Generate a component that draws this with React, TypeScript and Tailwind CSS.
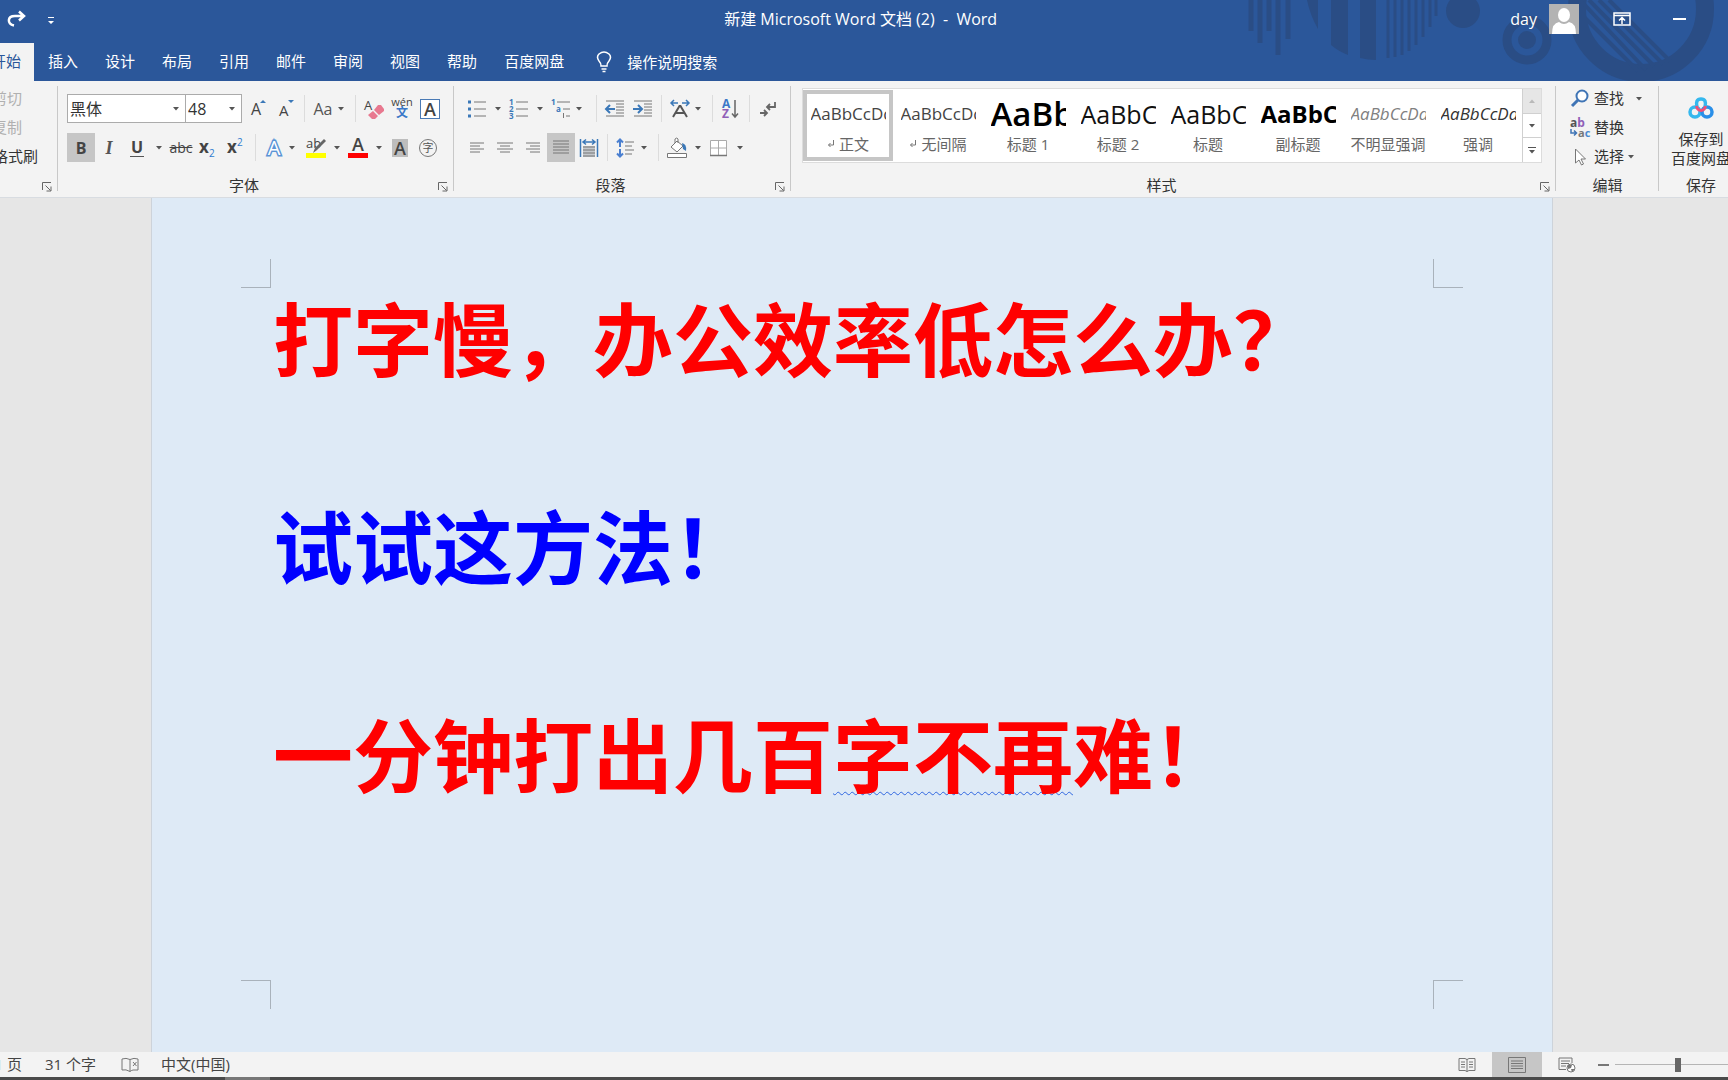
import React from "react";
import clsx from "clsx";

const tabs = ["插入", "设计", "布局", "引用", "邮件", "审阅", "视图", "帮助", "百度网盘"];

const styles = [
  { name: "正文", mark: true, sample: "AaBbCcDd", look: "text-[17px] text-[#444]" },
  { name: "无间隔", mark: true, sample: "AaBbCcDd", look: "text-[17px] text-[#444]" },
  { name: "标题 1", sample: "AaBbCc", look: "text-[33px] font-semibold text-black" },
  { name: "标题 2", sample: "AaBbCc", look: "text-[25px] text-[#111]" },
  { name: "标题", sample: "AaBbCc", look: "text-[25px] text-[#111]" },
  { name: "副标题", sample: "AaBbCc", look: "text-[24px] font-bold text-black" },
  { name: "不明显强调", sample: "AaBbCcDd", look: "text-[17px] italic text-[#808080]" },
  { name: "强调", sample: "AaBbCcDd", look: "text-[17px] italic text-[#333]" },
];

const Triangle = ({ className }: { className?: string }) => (
  <svg viewBox="0 0 6 4" className={clsx("h-1 w-1.5 shrink-0", className)} fill="#555">
    <path d="M0 0h6L3 3.6z" />
  </svg>
);

const Caret = ({ label, className = "w-3.5" }: { label: string; className?: string }) => (
  <button
    aria-label={label}
    className={clsx("flex h-full shrink-0 items-center justify-center", className)}
  >
    <Triangle />
  </button>
);

const Sep = () => <span className="mx-1 h-[27px] w-px shrink-0 bg-[#dcdcdc]" />;

type ToolProps = {
  label: string;
  active?: boolean;
  children: React.ReactNode;
};

const Tool = ({ label, active, children }: ToolProps) => (
  <button
    aria-label={label}
    title={label}
    className={clsx(
      "flex h-full w-7 shrink-0 items-center justify-center",
      active && "bg-[#c6c6c6]",
    )}
  >
    {children}
  </button>
);

const Icon = ({ children }: { children: React.ReactNode }) => (
  <svg
    viewBox="0 0 20 20"
    className="h-5 w-5 shrink-0 overflow-visible font-['Open_Sans',sans-serif]"
    fill="none"
    stroke="#777"
  >
    {children}
  </svg>
);

const Launcher = ({ label }: { label: string }) => (
  <button aria-label={label} className="absolute right-[6px] bottom-[5px]">
    <svg viewBox="0 0 10 10" className="h-[10px] w-[10px]" fill="none" stroke="#666">
      <path d="M.5 8V.5H9M3.500 3.500l5 5M9 4.500V9H4.500" />
    </svg>
  </button>
);

type GroupProps = {
  title?: string;
  launcher?: boolean;
  className?: string;
  children: React.ReactNode;
};

const Group = ({ title, launcher, className, children }: GroupProps) => (
  <section className={clsx("relative flex flex-col", className)}>
    {children}
    {title && (
      <h2
        className={clsx(
          "absolute inset-x-0 bottom-[2px] text-center leading-5",
          launcher && "pr-6",
        )}
      >
        {title}
      </h2>
    )}
    {launcher && <Launcher label={`${title ?? "剪贴板"}设置`} />}
    <span className="absolute top-[5px] right-0 bottom-[6px] w-px bg-[#c8c8c8]" />
  </section>
);

const Row = ({ children }: { children: React.ReactNode }) => (
  <div className="flex h-[29px] items-center">{children}</div>
);

const lines = (rows: [number, number, number][]) =>
  rows.map(([y, from, to]) => <path key={y} d={`M${from} ${y}H${to}`} />);

const TitleArt = () => (
  <svg
    viewBox="0 0 528 81"
    className="pointer-events-none absolute top-0 right-0 h-[81px] w-[528px]"
    fill="#2a4d85"
    stroke="#2a4d85"
  >
    <g strokeWidth="5" fill="none">
      <path d="M51 0V31M60 0V43M69 0V31M78 0V55M88 0V39" />
      <path strokeWidth="3" d="M188 0V58M195 0V57M202 0V55M209 0V51M216 0V45M223 0V37M230 0V27M236 0V16" />
    </g>
    <g stroke="none">
      <path d="M107 0h11v29Q110 15 107 0zM131 0h17v55q-10-4-17-10zM160 0h16v60q-8 0-16-2z" />
      <circle cx="263" cy="11" r="17" />
      <circle cx="327" cy="40" r="9" />
    </g>
    <g fill="none">
      <circle cx="327" cy="40" r="20" strokeWidth="9" />
      <circle cx="441" cy="9" r="64" strokeWidth="18" />
      <path
        strokeWidth="4"
        d="M372 5l66 66M380 0l66 70M389 0l65 66M399 0l64 64M409 0l61 61"
      />
    </g>
  </svg>
);

const TitleBar = () => (
  <div className="relative flex h-[43px] items-center pb-[5px] text-base">
    <button aria-label="重做" className="ml-[7px]">
      <svg viewBox="0 0 20 18" className="h-[18px] w-5" fill="none" stroke="#fff" strokeWidth="2.500">
        <path d="M7 15.500C0 14 0 6 8 6h8M12 1.500l5 4.500-5 4.500" />
      </svg>
    </button>
    <button aria-label="自定义快速访问工具栏" className="ml-5 pt-1">
      <svg viewBox="0 0 8 8" className="h-2 w-2" fill="#fff">
        <path d="M1 0h6v1H1zM1 4h6L4 7z" />
      </svg>
    </button>
    <h1 className="flex-1 pl-[156px] text-center whitespace-pre">
      {"新建 Microsoft Word 文档 (2)  -  Word"}
    </h1>
    <div className="mr-[42px] flex items-center">
      <span>day</span>
      <button aria-label="帐户" className="ml-3">
        <svg viewBox="0 0 30 30" className="h-[30px] w-[30px]">
          <path fill="#b3b3b3" d="M0 0h30v30H0z" />
          <ellipse cx="15" cy="11" rx="6" ry="7" fill="#fff" />
          <path fill="#fff" d="M3 30q0-11 7-12 5 4 10 0 7 1 7 12z" />
        </svg>
      </button>
      <button aria-label="功能区显示选项" className="ml-[34px]">
        <svg viewBox="0 0 18 14" className="h-[14px] w-[18px]" fill="none" stroke="#fff" strokeWidth="1.500">
          <path d="M1 1h16v12H1zM1 3.500h16M9 12V6M6 8.500L9 5.500l3 3" />
        </svg>
      </button>
      <button aria-label="最小化" className="ml-[42px] flex h-4 w-[13px] items-center">
        <span className="h-[2px] w-full bg-white" />
      </button>
    </div>
  </div>
);

const TabBar = () => (
  <nav className="relative flex h-[38px] items-stretch">
    <div className="flex w-[34px] justify-end overflow-hidden bg-[#f3f3f3] pr-[13px]">
      <button className="shrink-0 pb-[2px] text-[#2b579a]">开始</button>
    </div>
    <div className="ml-[14px] flex gap-[27px] pb-[2px]">
      {tabs.map((tab) => (
        <button key={tab}>{tab}</button>
      ))}
    </div>
    <label className="ml-8 flex items-center gap-[15px]">
      <svg viewBox="0 0 16 22" className="h-[22px] w-4" fill="none" stroke="#fff" strokeWidth="1.500">
        <path d="M5 15q0-3-2-5Q0 6 3 3q5-4 10 0 3 3 0 7-2 2-2 5zM5.500 18h5M6.500 20.500h3" />
      </svg>
      <input
        type="text"
        placeholder="操作说明搜索"
        className="w-40 bg-transparent outline-none placeholder:text-white"
      />
    </label>
  </nav>
);

const ClipboardGroup = () => (
  <Group launcher className="w-[58px] shrink-0 items-end overflow-hidden pt-[3px] pr-5">
    <button className="mr-4 h-[29px] shrink-0 whitespace-nowrap text-[#b0b0b0]">剪切</button>
    <button className="mr-4 h-[29px] shrink-0 whitespace-nowrap text-[#b0b0b0]">复制</button>
    <button className="h-[29px] shrink-0 whitespace-nowrap">格式刷</button>
  </Group>
);

type ComboProps = { label: string; value: string; className: string };

const Combo = ({ label, value, className }: ComboProps) => (
  <div className={clsx("relative h-[29px] border border-[#ababab] bg-white", className)}>
    <select
      aria-label={label}
      className="h-full w-full appearance-none bg-transparent pl-[2px] text-base outline-none"
    >
      <option>{value}</option>
    </select>
    <Triangle className="pointer-events-none absolute top-3 right-[6px]" />
  </div>
);

const FontGroup = () => (
  <Group title="字体" launcher className="w-[396px] shrink-0 gap-[10px] pt-[13px] pl-[9px]">
    <Row>
      <Combo label="字体" value="黑体" className="w-[119px]" />
      <Combo label="字号" value="48" className="-ml-px mr-[2px] w-[57px]" />
      <Tool label="增大字号">
        <Icon>
          <text x="3" y="16" fontSize="16" fill="#444" stroke="none">A</text>
          <path fill="#3b78b8" stroke="none" d="M12 4l3-3 3 3z" />
        </Icon>
      </Tool>
      <Tool label="减小字号">
        <Icon>
          <text x="3" y="17" fontSize="15" fill="#444" stroke="none">A</text>
          <path fill="#3b78b8" stroke="none" d="M12 1l3 3 3-3z" />
        </Icon>
      </Tool>
      <Sep />
      <Tool label="更改大小写">
        <span className="text-base text-[#555]">Aa</span>
      </Tool>
      <Caret label="大小写选项" className="mr-1.5 w-2" />
      <Sep />
      <Tool label="清除所有格式">
        <Icon>
          <text x="0" y="11" fontSize="13" fill="#444" stroke="none">A</text>
          <path fill="#e8788f" stroke="none" d="M14 6h3l3 4v2l-5 4-5-5zM9 12l5 5-3 3H8l-4-4z" />
        </Icon>
      </Tool>
      <Tool label="拼音指南">
        <Icon>
          <text x="10" y="7" fontSize="11" textAnchor="middle" fill="#444" stroke="none">wén</text>
          <text x="10" y="18" fontSize="12" fontWeight="bold" textAnchor="middle" fill="#3b78c8" stroke="none" className="font-['Noto_Sans_CJK_SC',sans-serif]">文</text>
        </Icon>
      </Tool>
      <Tool label="字符边框">
        <span className="flex h-5 w-5 items-center justify-center border border-[#4a7ab5] bg-white text-lg leading-none font-semibold text-[#444]">
          A
        </span>
      </Tool>
    </Row>
    <Row>
      <Tool label="加粗" active>
        <b className="text-base text-[#444]">B</b>
      </Tool>
      <Tool label="倾斜">
        <i className="font-['Liberation_Serif',serif] text-lg font-bold text-[#555]">I</i>
      </Tool>
      <Tool label="下划线">
        <b className="border-b border-[#555] px-px text-base leading-[17px] text-[#444]">U</b>
      </Tool>
      <Caret label="下划线样式" className="w-4" />
      <Tool label="删除线">
        <span className="text-sm text-[#444] line-through">abc</span>
      </Tool>
      <Tool label="下标">
        <Icon>
          <text x="0" y="15" fontSize="17" fontWeight="bold" fill="#444" stroke="none">x</text>
          <text x="10" y="19" fontSize="10" fill="#2f7bd0" stroke="none">2</text>
        </Icon>
      </Tool>
      <Tool label="上标">
        <Icon>
          <text x="0" y="15" fontSize="17" fontWeight="bold" fill="#444" stroke="none">x</text>
          <text x="10" y="8" fontSize="10" fill="#2f7bd0" stroke="none">2</text>
        </Icon>
      </Tool>
      <Sep />
      <Tool label="文本效果">
        <Icon>
          <text
            x="10"
            y="17"
            fontSize="20"
            textAnchor="middle"
            fill="#fff"
            stroke="#5b94d6"
            strokeWidth="3"
            paintOrder="stroke"
          >
            A
          </text>
        </Icon>
      </Tool>
      <Caret label="文本效果选项" className="mr-1.5 w-2" />
      <Tool label="突出显示">
        <Icon>
          <text x="0" y="10" fontSize="13" fill="#444" stroke="none">ab</text>
          <path fill="#666" stroke="none" d="M18 1l2 2-9 9-4 3 2-5z" />
          <path fill="#ff0" stroke="none" d="M0 15h20v5H0z" />
        </Icon>
      </Tool>
      <Caret label="突出显示颜色" />
      <Tool label="字体颜色">
        <Icon>
          <text x="10" y="13" fontSize="18" fontWeight="600" textAnchor="middle" fill="#444" stroke="none">A</text>
          <path fill="#f00" stroke="none" d="M0 15h20v5H0z" />
        </Icon>
      </Tool>
      <Caret label="字体颜色选项" />
      <Tool label="字符底纹">
        <span className="flex h-[18px] w-4 items-center justify-center bg-[#bdbdbd] text-lg leading-none font-semibold text-[#444]">
          A
        </span>
      </Tool>
      <Tool label="带圈字符">
        <span className="flex h-[18px] w-[18px] items-center justify-center rounded-full border border-[#777] text-[11px] leading-none text-[#555]">
          字
        </span>
      </Tool>
    </Row>
  </Group>
);

const ParagraphGroup = () => (
  <Group title="段落" launcher className="w-[337px] shrink-0 gap-[10px] pt-[13px] pl-[9px]">
    <Row>
      <Tool label="项目符号">
        <Icon>
          {lines([[3, 7, 19], [10, 7, 19], [17, 7, 19]])}
          <path stroke="#3b78b8" strokeWidth="3" d="M1 3h3M1 10h3M1 17h3" />
        </Icon>
      </Tool>
      <Caret label="项目符号库" />
      <Tool label="编号">
        <Icon>
          {lines([[3, 7, 19], [10, 7, 19], [17, 7, 19]])}
          <g fontSize="8" fontWeight="bold" fill="#3b78b8" stroke="none">
            <text x="0" y="6">1</text>
            <text x="0" y="13">2</text>
            <text x="0" y="20">3</text>
          </g>
        </Icon>
      </Tool>
      <Caret label="编号库" />
      <Tool label="多级列表">
        <Icon>
          {lines([[3, 6, 19], [10, 12, 19], [17, 15, 19]])}
          <path d="M12.500 14v5" />
          <g fontSize="8" fontWeight="bold" fill="#3b78b8" stroke="none">
            <text x="0" y="6">1</text>
            <text x="5" y="13">a</text>
          </g>
        </Icon>
      </Tool>
      <Caret label="多级列表库" className="mr-[9px] w-2" />
      <Sep />
      <Tool label="减少缩进量">
        <Icon>
          {lines([[2, 1, 19], [5, 11, 19], [8, 11, 19], [11, 11, 19], [14, 11, 19], [17, 1, 19]])}
          <path stroke="#3b78b8" strokeWidth="2" d="M10 10H2M5 6l-4 4 4 4" />
        </Icon>
      </Tool>
      <Tool label="增加缩进量">
        <Icon>
          {lines([[2, 1, 19], [5, 11, 19], [8, 11, 19], [11, 11, 19], [14, 11, 19], [17, 1, 19]])}
          <path stroke="#3b78b8" strokeWidth="2" d="M0 10h8M5 6l4 4-4 4" />
        </Icon>
      </Tool>
      <Sep />
      <Tool label="中文版式">
        <Icon>
          <path strokeWidth="2" stroke="#555" d="M3 18L9.500 7h1L17 18M6 14h8" />
          <path stroke="#3b78b8" strokeWidth="1.500" d="M8 4H1M4 1L1 4l3 3M12 4h7M16 1l3 3-3 3" />
        </Icon>
      </Tool>
      <Caret label="中文版式选项" className="mr-1.5 w-2" />
      <Sep />
      <Tool label="排序">
        <Icon>
          <text x="1" y="9" fontSize="12" fontWeight="bold" fill="#3b78c8" stroke="none">A</text>
          <text x="1" y="19" fontSize="12" fontWeight="bold" fill="#9060b8" stroke="none">Z</text>
          <path strokeWidth="1.500" stroke="#666" d="M14 1v17M11 14.500l3 3.500 3-3.500" />
        </Icon>
      </Tool>
      <Sep />
      <Tool label="显示编辑标记">
        <Icon>
          <path stroke="#666" strokeWidth="1.800" d="M17 3v5H9M12 5L9 8l3 3M2 14h7M6 11l3 3-3 3" />
        </Icon>
      </Tool>
    </Row>
    <Row>
      <Tool label="左对齐">
        <Icon>{lines([[5, 3, 17], [8, 3, 13], [11, 3, 17], [14, 3, 13]])}</Icon>
      </Tool>
      <Tool label="居中">
        <Icon>{lines([[5, 2, 18], [8, 5, 15], [11, 2, 18], [14, 5, 15]])}</Icon>
      </Tool>
      <Tool label="右对齐">
        <Icon>{lines([[5, 3, 17], [8, 7, 17], [11, 3, 17], [14, 7, 17]])}</Icon>
      </Tool>
      <Tool label="两端对齐" active>
        <Icon>{lines([[3, 2, 18], [6, 2, 18], [9, 2, 18], [12, 2, 18], [15, 2, 18]])}</Icon>
      </Tool>
      <Tool label="分散对齐">
        <Icon>
          <path fill="#c4c8cc" stroke="none" d="M4 8h12v11H4z" />
          {lines([[9, 4, 16], [12, 4, 16], [15, 4, 16], [18, 4, 16]])}
          <path stroke="#3b78b8" strokeWidth="1.500" d="M1.500 1v18M18.500 1v18M4 4h12M7 1.500L4 4l3 2.500M13 1.500L16 4l-3 2.500" />
        </Icon>
      </Tool>
      <Sep />
      <Tool label="行距">
        <Icon>
          {lines([[4, 9, 18], [8, 9, 16], [12, 9, 18], [16, 9, 16]])}
          <path stroke="#4a7fd0" strokeWidth="2" d="M4 2v7M1 4.500l3-3 3 3M4 11v7M1 15.500l3 3 3-3" />
        </Icon>
      </Tool>
      <Caret label="行距选项" className="mr-1.5 w-2" />
      <Sep />
      <Tool label="底纹">
        <Icon>
          <path fill="#fff" d="M4 9l6-6 6 5-6 6zM8 5V1q2-2 3 0v4" />
          <path fill="#3b78b8" stroke="none" d="M15 5q5 1 4 8l-3-2z" />
          <path fill="#fff" d="M.5 15.500h19v4H.5z" />
        </Icon>
      </Tool>
      <Caret label="底纹颜色" />
      <Tool label="边框">
        <Icon>
          <path fill="#fff" stroke="#aaa" d="M1.500 2.500h16v15h-16zM9.500 2.500v15M1.500 10h16" />
          <path strokeWidth="1.500" d="M1 17.500h17" />
        </Icon>
      </Tool>
      <Caret label="边框选项" />
    </Row>
  </Group>
);

const StylesGroup = () => (
  <Group title="样式" launcher className="min-w-0 flex-1 pt-[7px] pr-[14px] pl-[11px]">
    <div className="flex h-[75px] border border-[#dcdcdc] bg-white">
      <div className="flex min-w-0 flex-1 overflow-hidden py-px">
        {styles.map((s, i) => (
          <button
            key={s.name}
            className={clsx(
              "flex w-[90px] shrink-0 flex-col items-center border-4",
              i === 0 ? "border-[#c6c6c6]" : "border-transparent",
            )}
          >
            <span className="flex h-10 w-[75px] items-center overflow-hidden">
              <span className={clsx("leading-10", s.look)}>{s.sample}</span>
            </span>
            <span className="flex items-center gap-1 leading-5 whitespace-nowrap text-[#666]">
              {s.mark && (
                <svg viewBox="0 0 8 8" className="h-2 w-2" fill="none" stroke="#777">
                  <path d="M6.500 0v5H1.500M3.500 3l-2 2 2 2" />
                </svg>
              )}
              {s.name}
            </span>
          </button>
        ))}
      </div>
      <div className="flex w-[19px] flex-col divide-y divide-[#d0d0d0] border-l border-[#d0d0d0]">
        <button aria-label="上一行" className="flex flex-1 items-center justify-center bg-[#e6e6e6]">
          <Triangle className="rotate-180 opacity-30" />
        </button>
        <button aria-label="下一行" className="flex flex-1 items-center justify-center">
          <Triangle />
        </button>
        <button aria-label="其他样式" className="flex flex-1 flex-col items-center justify-center gap-[2px]">
          <span className="h-px w-2 bg-[#555]" />
          <Triangle />
        </button>
      </div>
    </div>
  </Group>
);

const EditGroup = () => (
  <Group title="编辑" className="w-[103px] shrink-0 items-start pt-[3px] pl-[14px]">
    <button className="flex h-[29px] items-center gap-1">
      <Icon>
        <circle cx="12" cy="7" r="5.500" fill="#fff" stroke="#3f74b5" strokeWidth="2" />
        <path stroke="#3f74b5" strokeWidth="3" d="M8 11l-6 6" />
      </Icon>
      查找
      <Triangle className="ml-2" />
    </button>
    <button className="flex h-[29px] items-center gap-1">
      <Icon>
        <text x="0" y="9" fontSize="12" fontWeight="bold" fill="#555" stroke="none">
          a<tspan fill="#9060b8">b</tspan>
        </text>
        <text x="8" y="19" fontSize="11" fontWeight="bold" fill="#777" stroke="none">
          a<tspan fill="#4a8ad0">c</tspan>
        </text>
        <path stroke="#3f74b5" strokeWidth="1.500" d="M1 11v4h5M4 12.500l2.500 2.500L4 17.500" />
      </Icon>
      替换
    </button>
    <button className="flex h-[29px] items-center gap-1">
      <Icon>
        <path fill="#fff" d="M5.500 2v14l3.500-3 2.500 5 2-1-2.500-5h4.500z" />
      </Icon>
      选择
      <Triangle />
    </button>
  </Group>
);

const SaveGroup = () => (
  <section className="w-[69px] shrink-0 overflow-hidden">
    <div className="flex w-[84px] flex-col items-center">
      <button className="flex w-full flex-col items-center pt-4 leading-[19px] whitespace-nowrap">
        <svg viewBox="0 0 26 22" className="mb-[11px] h-[22px] w-[26px]" fill="none" strokeWidth="3.500">
          <circle cx="7" cy="15" r="5" stroke="#35b8ee" />
          <circle cx="19" cy="15" r="5" stroke="#2a8fe8" />
          <path stroke="#35b8ee" d="M9 10Q7 2 13 2" />
          <path stroke="#35b8ee" d="M13 2q6 0 4 8" />
          <path stroke="#f04f78" strokeWidth="3" d="M8.500 9q1 4.500 4.500 4.500T17.500 9" />
        </svg>
        保存到
        <br />
        百度网盘
      </button>
      <h2 className="mt-[7px] leading-5">保存</h2>
    </div>
  </section>
);

const CropMark = ({ className }: { className: string }) => (
  <span aria-hidden className={clsx("absolute h-[29px] w-[30px] border-[#a9b2bb]", className)} />
);

const Document = () => (
  <main className="flex min-h-0 flex-1 bg-[#e6e6e6] pr-[175px] pl-[151px]">
    <article className="relative flex-1 border-x border-[#cdd3da] bg-[#deeaf6] pt-[89px] pl-[121px] text-[80px] leading-[104px] font-bold text-[#f00]">
      <CropMark className="top-[61px] left-[89px] border-r border-b" />
      <CropMark className="top-[61px] right-[89px] border-b border-l" />
      <CropMark className="bottom-[43px] left-[89px] border-t border-r" />
      <CropMark className="right-[89px] bottom-[43px] border-t border-l" />
      <p className="mb-[104px]">打字慢，办公效率低怎么办？</p>
      <p className="mb-[104px] text-[#00f]">试试这方法！</p>
      <p>
        一分钟打出几百
        <span className="underline decoration-[#2f66e0] decoration-wavy decoration-1 underline-offset-5 [text-decoration-skip-ink:none]">
          字不再
        </span>
        难！
      </p>
    </article>
  </main>
);

const StatusBar = () => (
  <footer className="flex h-[25px] shrink-0 items-center overflow-hidden bg-[#f3f3f3] text-[#444]">
    <div className="flex w-[22px] shrink-0 justify-end overflow-hidden">
      <span className="shrink-0 whitespace-nowrap">第 1 页，共 1 页</span>
    </div>
    <span className="ml-[23px]">31 个字</span>
    <button aria-label="校对" className="ml-[25px]">
      <svg viewBox="0 0 18 16" className="h-4 w-[18px]" fill="none" stroke="#777">
        <path d="M9 2.500v12M9 2.500Q5 .5 1 2v11q4-1 8 1.500 1-1 3-1.500h5V2Q13 .5 9 2.500M12 5l3.500 4M15.500 5L12 9" />
      </svg>
    </button>
    <span className="ml-[22px] flex-1">中文(中国)</span>
    <button aria-label="阅读视图" className="flex h-full w-[50px] items-center justify-center">
      <svg viewBox="0 0 18 16" className="h-4 w-[18px]" fill="none" stroke="#777">
        <path d="M9 2v13M1 1.500h6l2 1 2-1h6v12h-6l-2 1-2-1H1zM3 5h4M3 7.500h4M3 10h4M11 5h4M11 7.500h4M11 10h4" />
      </svg>
    </button>
    <button aria-label="页面视图" className="flex h-full w-[50px] items-center justify-center bg-[#c6c6c6]">
      <svg viewBox="0 0 18 16" className="h-4 w-[18px]" fill="none" stroke="#777">
        <path d="M.5.5h17v15H.5zM3 4h12M3 6.500h12M3 9h12M3 11.500h12" />
      </svg>
    </button>
    <button aria-label="Web 版式视图" className="flex h-full w-[50px] items-center justify-center">
      <svg viewBox="0 0 18 16" className="h-4 w-[18px]" fill="none" stroke="#777">
        <path d="M8 12.500H1V1h13v5M3 4h9M3 6.500h8M3 9h5" />
        <circle cx="13" cy="11" r="4" fill="#fff" />
        <path fill="#777" stroke="none" d="M10 8h4l-1 3-3 1zM13 12h4l-3 3z" />
      </svg>
    </button>
    <button aria-label="缩小" className="ml-[6px] flex h-full w-[11px] items-center">
      <span className="h-[2px] w-full bg-[#777]" />
    </button>
    <input
      type="range"
      aria-label="缩放"
      defaultValue={50}
      className="mr-[-13px] ml-[6px] h-[14px] w-[126px] shrink-0 appearance-none bg-[linear-gradient(#b5b5b5,#b5b5b5)] bg-[length:100%_1px] bg-center bg-no-repeat [&::-webkit-slider-thumb]:h-[14px] [&::-webkit-slider-thumb]:w-[6px] [&::-webkit-slider-thumb]:appearance-none [&::-webkit-slider-thumb]:bg-[#666]"
    />
  </footer>
);

export default function App() {
  return (
    <div className="flex h-screen flex-col overflow-hidden font-['Open_Sans','Noto_Sans_CJK_SC',sans-serif] text-[15px] text-[#333]">
      <header className="relative shrink-0 bg-[#2b579a] text-white">
        <TitleArt />
        <TitleBar />
        <TabBar />
      </header>
      <div className="flex h-[117px] shrink-0 border-b border-[#d8dce1] bg-[#f3f3f3]">
        <ClipboardGroup />
        <FontGroup />
        <ParagraphGroup />
        <StylesGroup />
        <EditGroup />
        <SaveGroup />
      </div>
      <Document />
      <StatusBar />
      {/* edge of the taskbar under the window */}
      <div className="flex h-[3px] shrink-0 bg-[#4a4a4a]">
        <span className="ml-[225px] w-[45px] bg-[#777]" />
      </div>
    </div>
  );
}
